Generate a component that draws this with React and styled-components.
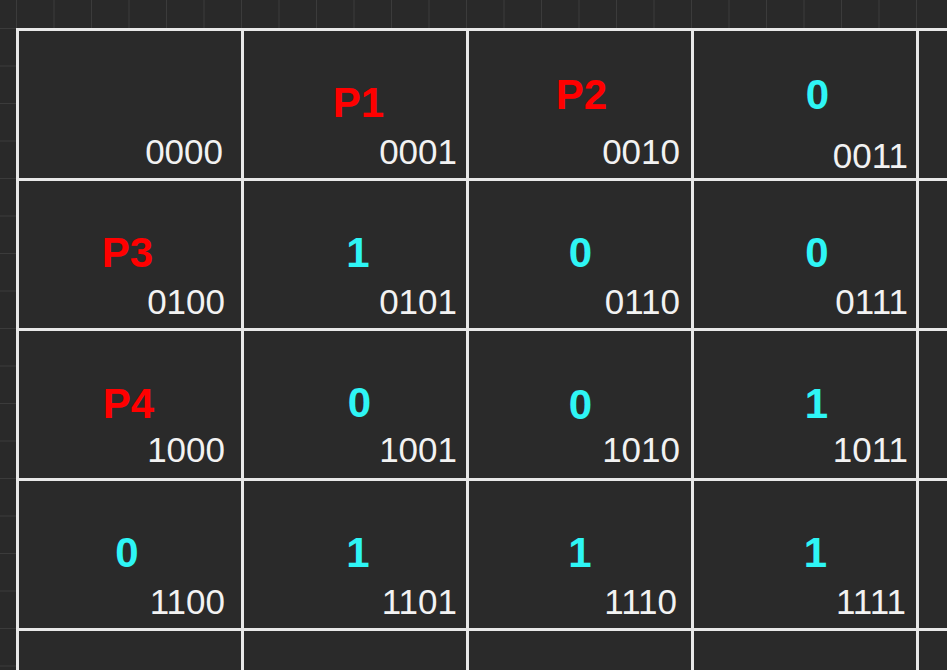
import styled, { createGlobalStyle } from "styled-components";

const GlobalStyle = createGlobalStyle`
    html, body {
        margin: 0;
        padding: 0;
        height: 100%;
        overflow: hidden;
    }

    body {
        background-color: #292929;
        background-image:
            linear-gradient(to right, #3b3b3b 1px, transparent 1px),
            linear-gradient(to bottom, #3b3b3b 1px, transparent 1px);
        background-size: 37.5px 37.5px;
        background-position: 16px 28px;
        font-family: "Liberation Sans", Arial, sans-serif;
    }
`;

// label, colour, binary, label dx / top, binary right / bottom gap
const cells = [
    [null, null, "0000", 0, 56, 20, 14],
    ["P1", "red", "0001", 3.5, 56, 11, 14],
    ["P2", "red", "0010", 1.5, 48, 13, 14],
    ["0", "cyan", "0011", 12.5, 48, 10, 10],
    null,
    ["P3", "red", "0100", -2.5, 56, 18, 14],
    ["1", "cyan", "0101", 3, 56, 11, 14],
    ["0", "cyan", "0110", 0.5, 56, 13, 14],
    ["0", "cyan", "0111", 12, 56, 10, 14],
    null,
    ["P4", "red", "1000", -1.5, 57, 18, 16],
    ["0", "cyan", "1001", 4.5, 56, 11, 16],
    ["0", "cyan", "1010", 0.5, 58, 13, 16],
    ["1", "cyan", "1011", 11.5, 57, 10, 16],
    null,
    ["0", "cyan", "1100", -3, 56, 18, 14],
    ["1", "cyan", "1101", 3, 56, 11, 14],
    ["1", "cyan", "1110", 0, 56, 16, 14],
    ["1", "cyan", "1111", 10.5, 56, 12, 14],
    null,
    null, null, null, null, null,
];

const App = () => {
    return (
        <>
            <GlobalStyle />
            <Board>
                {cells.map((cell, i) => (
                    <Cell key={i}>
                        {cell && cell[0] && (
                            <Label $color={cell[1]} $dx={cell[3]} $top={cell[4]}>
                                {cell[0]}
                            </Label>
                        )}
                        {cell && (
                            <Binary $right={cell[5]} $bottom={cell[6]}>
                                {cell[2]}
                            </Binary>
                        )}
                    </Cell>
                ))}
            </Board>
        </>
    );
};

const Board = styled.div`
    display: grid;
    grid-template-columns: repeat(5, 222px);
    grid-auto-rows: 147px;
    gap: 3px;
    padding: 3px;
    margin: 28px 0 0 16px;
    width: max-content;
    background-color: #e8e8e8;
`;

const Cell = styled.div`
    display: flex;
    flex-direction: column;
    background-color: #2a2a2a;
`;

const Label = styled.div`
    align-self: center;
    margin-top: ${(p) => p.$top - 5.5}px;
    margin-left: ${(p) => (p.$dx > 0 ? p.$dx * 2 : 0)}px;
    margin-right: ${(p) => (p.$dx < 0 ? -p.$dx * 2 : 0)}px;
    font-size: 42px;
    font-weight: bold;
    line-height: 1;
    color: ${(p) => (p.$color === "red" ? "#ff0000" : "#2ef5f5")};
`;

const Binary = styled.div`
    align-self: flex-end;
    margin-top: auto;
    margin-right: ${(p) => p.$right - 2}px;
    margin-bottom: ${(p) => p.$bottom - 5}px;
    font-size: 35px;
    line-height: 1;
    color: #f2f2f2;
`;

export default App;
